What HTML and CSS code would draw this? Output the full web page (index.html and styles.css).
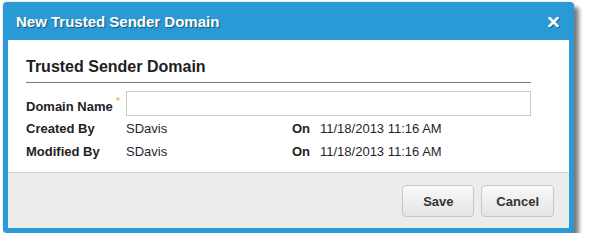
FILE: index.html
```html
<!DOCTYPE html>
<html>
<head>
<meta charset="utf-8">
<link rel="stylesheet" href="styles.css">
</head>
<body>
<div class="dialog">
  <div class="header">
    <span class="title">New Trusted Sender Domain</span>
    <span class="close" aria-label="Close">
      <svg width="11" height="10" viewBox="0 0 11 10">
        <path d="M1.5 1 L9.5 9 M9.5 1 L1.5 9" stroke="#ffffff" stroke-width="2.6" stroke-linecap="square" fill="none"/>
      </svg>
    </span>
  </div>
  <div class="body">
    <h2 class="section">Trusted Sender Domain</h2>
    <div class="grid">
      <div class="label">Domain Name<span class="req">*</span></div>
      <input class="input" type="text">
      <div class="label">Created By</div>
      <div class="value">SDavis</div>
      <div class="label on">On</div>
      <div class="value">11/18/2013 11:16 AM</div>
      <div class="label">Modified By</div>
      <div class="value">SDavis</div>
      <div class="label on">On</div>
      <div class="value">11/18/2013 11:16 AM</div>
    </div>
  </div>
  <div class="footer">
    <button class="btn">Save</button>
    <button class="btn">Cancel</button>
  </div>
</div>
</body>
</html>
```

FILE: styles.css
```css
html, body {
  margin: 0;
  padding: 0;
  background: #ffffff;
}
body {
  font-family: "Liberation Sans", Arial, sans-serif;
  padding: 2px 0 0 3px;
}
.dialog {
  width: 571px;
  height: 231px;
  box-sizing: border-box;
  background: #2a9ad6;
  border-radius: 4px;
  padding: 0 5px 5px 5px;
  box-shadow: 5px 5px 4px rgba(0, 0, 0, 0.5), 0 0 3px rgba(0, 0, 0, 0.18);
  display: flex;
  flex-direction: column;
}
.header {
  height: 38px;
  display: flex;
  align-items: center;
  justify-content: space-between;
  padding: 1px 10px 0 8px;
  box-sizing: border-box;
}
.title {
  color: #ffffff;
  font-weight: bold;
  font-size: 15px;
  line-height: 18px;
  text-shadow: 1px 1px 1px rgba(0, 0, 0, 0.45);
}
.close {
  display: flex;
  filter: drop-shadow(1px 1px 0 rgba(0, 0, 0, 0.3));
  margin-top: 1px;
}
.body {
  background: #ffffff;
  height: 132px;
  box-sizing: border-box;
  padding: 17px 38px 0 18px;
}
.section {
  margin: 0;
  font-size: 16px;
  font-weight: bold;
  line-height: 20px;
  color: #1e1e1e;
  padding-bottom: 5px;
  border-bottom: 1px solid #777777;
}
.grid {
  margin-top: 8px;
  display: grid;
  grid-template-columns: 100px 166px 28px auto;
  grid-auto-rows: 21px;
  grid-template-rows: 25px;
  row-gap: 2px;
  align-items: center;
  font-size: 13px;
  color: #222222;
}
.grid > .value,
.grid > .label {
  line-height: 21px;
}
.grid > .label:first-child {
  line-height: 25px;
}
.label {
  font-weight: bold;
  white-space: nowrap;
}
.req {
  color: #f0a030;
  font-size: 11px;
  font-weight: normal;
  margin-left: 3px;
  vertical-align: 6px;
}
.input {
  grid-column: 2 / 5;
  height: 25px;
  box-sizing: border-box;
  border: 1px solid #c9c9c9;
  background: #ffffff;
  margin: 0;
  padding: 0 4px;
  outline: none;
}
.value {
  color: #1f1f2e;
  white-space: nowrap;
}
.footer {
  flex: 1;
  background: #ececec;
  border-top: 1px solid #d6d6d6;
  display: flex;
  justify-content: flex-end;
  align-items: flex-start;
  gap: 7px;
  padding: 12px 15px 0 0;
}
.btn {
  height: 32px;
  min-width: 72px;
  box-sizing: border-box;
  padding: 0 14px;
  font-family: "Liberation Sans", Arial, sans-serif;
  font-size: 13px;
  font-weight: bold;
  color: #333333;
  background: linear-gradient(#f9f9f9, #e4e4e4);
  border: 1px solid #c6c6c6;
  border-radius: 4px;
}
```
